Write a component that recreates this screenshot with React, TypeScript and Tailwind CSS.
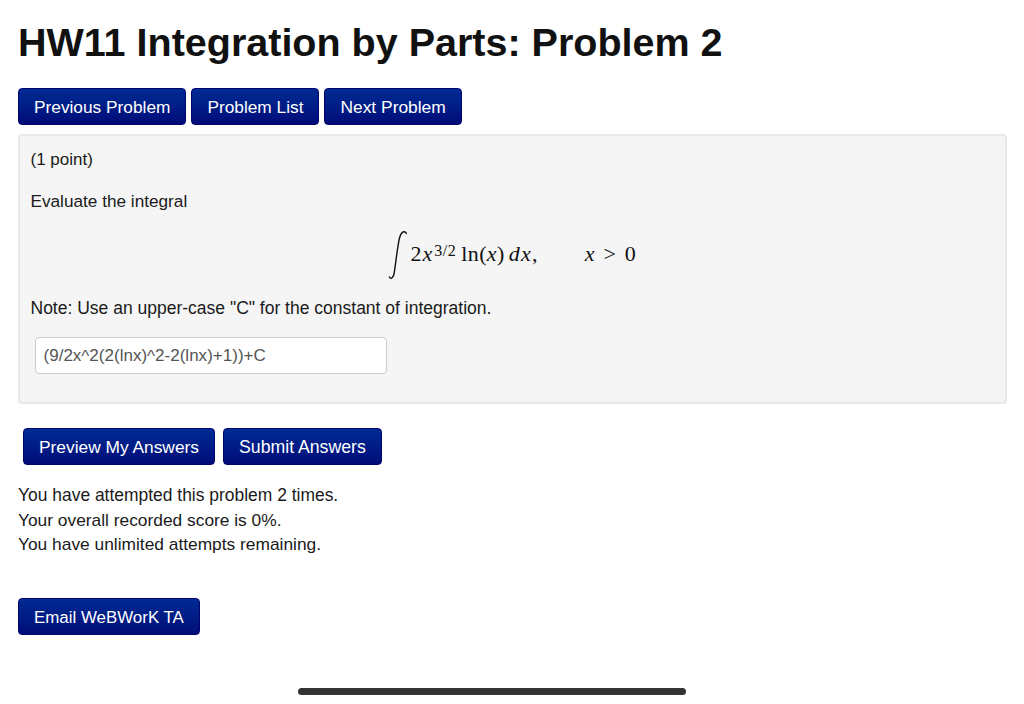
const btn =
  "inline-block h-[37px] px-[15px] rounded-[4px] border border-[#00046b] bg-gradient-to-b from-[#002a94] to-[#000b78] text-white leading-[36px] whitespace-nowrap";

const MI = "italic";

export default function App() {
  return (
    <div className="relative h-[704px] w-[1024px] overflow-hidden bg-white text-[17.5px] text-[#1a1a1a] font-['Liberation_Sans',Arial,sans-serif]">
      <div className="pl-[18px] pr-[17px] pt-[19px]">
        <h1 className="text-[39.5px] font-bold leading-[46px] text-[#111]">HW11 Integration by Parts: Problem 2</h1>
        <div className="mt-[23px] flex gap-[5px]">
          <button className={`${btn} text-[17.3px]`}>Previous Problem</button>
          <button className={`${btn} text-[17.3px]`}>Problem List</button>
          <button className={`${btn} text-[17.4px]`}>Next Problem</button>
        </div>
        <div className="mt-[9px] h-[270px] rounded-[4px] border-2 border-[#e8e8e8] bg-[#f5f5f5] pl-[10.5px] pt-[12px]">
          <p className="leading-[24px] text-[17px]">(1 point)</p>
          <p className="mt-[17px] leading-[24px] text-[17.2px]">Evaluate the integral</p>
          <div className="mt-[15px] flex h-[54px] items-center pb-[3px] pl-[356px] font-['Liberation_Serif',serif] text-[22px] text-[#111]">
            <svg width="24" height="54" viewBox="0 0 24 54" className="mt-[3px] shrink-0">
              <path d="M2 48.5 C3.5 51.5 6 50.5 7 46 C8.5 38 10.5 18 12.5 10 C14 4 16.5 3 18.5 4.2 C19.3 4.8 19.3 5.5 19 6" fill="none" stroke="#111" strokeWidth="1.4" />
            </svg>
            <span>2<span className={`${MI} ml-[1px]`}>x</span></span>
            <sup className="relative top-[-3px] ml-[2px] text-[16px] leading-none tracking-[0.5px]">3/2</sup>
            <span className="ml-[5px] tracking-[0.4px]">ln(<span className={MI}>x</span>)</span>
            <span className="ml-[4px] tracking-[1.2px]"><span className={MI}>dx</span>,</span>
            <span className="ml-[46px]"><span className={MI}>x</span></span>
            <span className="ml-[9px]">&gt;</span>
            <span className="ml-[9px]">0</span>
          </div>
          <p className="mt-[14px] leading-[24px]">Note: Use an upper-case "C" for the constant of integration.</p>
          <div className="mt-[17px] ml-[4px] h-[37px] w-[352px] rounded-[4px] border border-[#cccccc] bg-white pl-[8px] text-[17.05px] leading-[36px] text-[#555]">
            (9/2x^2(2(lnx)^2-2(lnx)+1))+C
          </div>
        </div>
        <div className="mt-[24px] flex gap-[8px] pl-[5px]">
          <button className={`${btn} text-[17.35px]`}>Preview My Answers</button>
          <button className={`${btn} text-[17.7px]`}>Submit Answers</button>
        </div>
        <div className="mt-[18px] leading-[24.5px]">
          <p className="text-[17.45px]">You have attempted this problem 2 times.</p>
          <p className="text-[17.35px]">Your overall recorded score is 0%.</p>
          <p className="text-[17.35px]">You have unlimited attempts remaining.</p>
        </div>
        <div className="mt-[41px]">
          <button className={`${btn} text-[16.9px] leading-[37px]`}>Email WeBWorK TA</button>
        </div>
      </div>
      <div className="absolute left-[298px] top-[688px] h-[7px] w-[388px] rounded-full bg-[#333]" />
    </div>
  );
}
